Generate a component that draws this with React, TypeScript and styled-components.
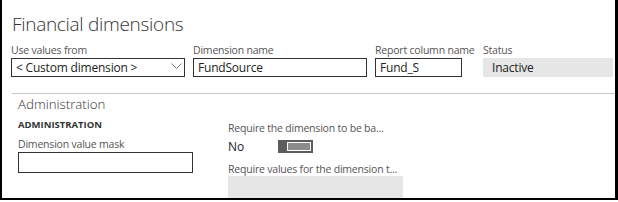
import React from 'react';
import styled, { createGlobalStyle } from 'styled-components';

const GlobalStyle = createGlobalStyle`
    html, body {
        margin: 0;
        padding: 0;
        background: #ffffff;
    }
    body {
        font-family: "Open Sans", "Noto Sans", "Liberation Sans", sans-serif;
        color: #222;
    }
`;

const Frame = styled.div`
    box-sizing: border-box;
    width: 618px;
    height: 200px;
    border-left: 2px solid #000;
    border-right: 3px solid #000;
    border-bottom: 2px solid #000;
    overflow: hidden;
    background: #fff;
`;

const Title = styled.h1`
    margin: 0;
    padding: 11px 0 0 10px;
    font-size: 19px;
    line-height: 26px;
    font-weight: 300;
    color: #333;
    letter-spacing: -0.3px;
`;

const FieldRow = styled.div`
    display: flex;
    gap: 8px;
    padding: 7px 0 0 9px;
`;

const Field = styled.div<{ $width: number }>`
    display: flex;
    flex-direction: column;
    width: ${(p) => p.$width}px;
    flex-shrink: 0;
`;

const Label = styled.div`
    font-size: 10.5px;
    line-height: 13px;
    color: #555;
    white-space: nowrap;
    letter-spacing: -0.2px;
`;

const Box = styled.div<{ $width?: number; $height?: number; $top?: number; $readonly?: boolean }>`
    box-sizing: border-box;
    position: relative;
    width: ${(p) => (p.$width ? `${p.$width}px` : '100%')};
    height: ${(p) => p.$height ?? 19}px;
    margin-top: ${(p) => p.$top ?? 1}px;
    border: 1px solid ${(p) => (p.$readonly ? '#e6e6e6' : '#333')};
    background: ${(p) => (p.$readonly ? '#e6e6e6' : '#fff')};
    font-size: 12px;
    line-height: 17px;
    padding-left: ${(p) => (p.$readonly ? 8 : 4)}px;
    color: #222;
    white-space: nowrap;
    overflow: hidden;
    letter-spacing: -0.2px;
`;

const Chevron = styled.svg`
    position: absolute;
    right: 2px;
    top: 4px;
`;

const Divider = styled.hr`
    margin: 16px 0 0 10px;
    border: 0;
    border-top: 1px solid #c8c8c8;
`;

const Section = styled.div`
    padding: 1px 0 0 16px;
`;

const SectionTitle = styled.div`
    font-size: 13.3px;
    line-height: 18px;
    font-weight: 300;
    color: #333;
`;

const Columns = styled.div`
    display: flex;
    margin-top: 5px;
`;

const LeftColumn = styled.div`
    width: 210px;
    display: flex;
    flex-direction: column;
`;

const RightColumn = styled.div`
    display: flex;
    flex-direction: column;
    padding-top: 4px;
`;

const GroupTitle = styled.div`
    font-size: 9.5px;
    line-height: 13px;
    font-weight: 700;
    color: #333;
    margin-bottom: 7px;
`;

const ToggleRow = styled.div`
    display: flex;
    align-items: center;
    height: 16px;
    margin: 3px 0 9px;
`;

const ToggleText = styled.span`
    font-size: 12px;
    width: 50px;
    color: #222;
`;

const Track = styled.div`
    display: flex;
    width: 35px;
    height: 13px;
    box-sizing: border-box;
    background: #5c5c5c;
    padding: 2px 2px 2px 0;
`;

const Thumb = styled.div`
    width: 9px;
`;

const TrackFill = styled.div`
    flex: 1;
    border: 1px solid #fff;
    background: #8c8c8c;
`;

const App = () => (
    <>
        <GlobalStyle />
        <Frame>
            <Title>Financial dimensions</Title>
            <FieldRow>
                <Field $width={174}>
                    <Label>Use values from</Label>
                    <Box>
                        &lt; Custom dimension &gt;
                        <Chevron width="11" height="7" viewBox="0 0 11 7">
                            <path d="M0.5 0.5 L5.5 5.5 L10.5 0.5" fill="none" stroke="#777" strokeWidth="1" />
                        </Chevron>
                    </Box>
                </Field>
                <Field $width={174}>
                    <Label>Dimension name</Label>
                    <Box>FundSource</Box>
                </Field>
                <Field $width={100}>
                    <Label>Report column name</Label>
                    <Box $width={87}>Fund_S</Box>
                </Field>
                <Field $width={130}>
                    <Label>Status</Label>
                    <Box $readonly>Inactive</Box>
                </Field>
            </FieldRow>
            <Divider />
            <Section>
                <SectionTitle>Administration</SectionTitle>
                <Columns>
                    <LeftColumn>
                        <GroupTitle>ADMINISTRATION</GroupTitle>
                        <Label>Dimension value mask</Label>
                        <Box $width={175} $height={21} $top={1} />
                    </LeftColumn>
                    <RightColumn>
                        <Label>Require the dimension to be ba...</Label>
                        <ToggleRow>
                            <ToggleText>No</ToggleText>
                            <Track>
                                <Thumb />
                                <TrackFill />
                            </Track>
                        </ToggleRow>
                        <Label>Require values for the dimension t...</Label>
                        <Box $width={175} $height={24} $top={0} $readonly />
                    </RightColumn>
                </Columns>
            </Section>
        </Frame>
    </>
);

export default App;
